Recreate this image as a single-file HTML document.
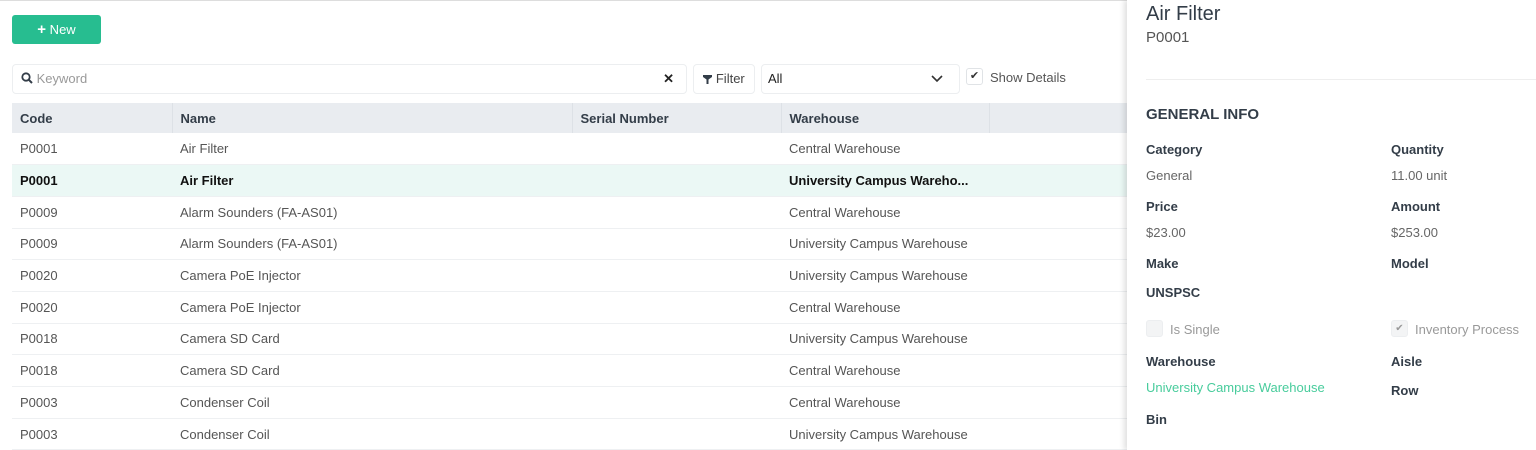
<!DOCTYPE html>
<html><head><style>
*{box-sizing:border-box;margin:0;padding:0}
body{width:1536px;height:450px;overflow:hidden;background:#fff;font-family:"Liberation Sans",sans-serif;position:relative}
.topline{position:absolute;left:0;top:0;width:1536px;height:1px;background:#ddd}
.btn{position:absolute;left:12px;top:15px;width:89px;height:29px;background:#27bd90;border-radius:3px;color:#fff;font-size:13px;line-height:29px;text-align:center}
.box{position:absolute;top:64px;height:30px;border:1px solid #eceef0;border-radius:4px;background:#fff;font-size:13px;line-height:28px;color:#444}
table{position:absolute;left:12px;top:103px;border-collapse:collapse;width:1115px;font-size:13px;table-layout:fixed}
th{background:#e9ecf0;color:#333d48;text-align:left;font-weight:bold;height:30px;padding-left:8px;border-right:1px solid #dde1e6}
td{height:31.7px;padding-left:8px;color:#555;border-bottom:1px solid #eef0f2;white-space:nowrap;overflow:hidden}
tr.sel td{background:#ebf8f5;color:#111;font-weight:bold}
.panel{position:absolute;left:1127px;top:0;width:409px;height:450px;background:#fff;box-shadow:-3px 0 5px rgba(0,0,0,.12)}
.p{position:absolute;font-size:13px}
.l{color:#333d48;font-weight:bold}
.v{color:#666}
</style></head><body>
<div class="topline"></div>
<div class="btn"><b style="font-size:15px">+</b> New</div>
<div class="box" style="left:12px;width:675px;padding-left:8px;color:#999">
<svg width="12" height="12" viewBox="0 0 12 12" style="vertical-align:-1px"><circle cx="5" cy="5" r="3.7" fill="none" stroke="#333d48" stroke-width="1.8"/><path d="M7.7 7.7L11 11" stroke="#333d48" stroke-width="2"/></svg> Keyword
<span style="position:absolute;right:12px;color:#222;font-weight:bold">✕</span></div>
<div class="box" style="left:693px;width:62px;text-align:center"><svg width="9" height="9" viewBox="0 0 9 9" style="vertical-align:-1px"><path d="M0 0h9v2L5.5 4.5V9h-2V4.5L0 2z" fill="#333d48"/></svg> Filter</div>
<div class="box" style="left:761px;width:199px;padding-left:6px;color:#222">All
<svg width="12" height="8" viewBox="0 0 12 8" style="position:absolute;right:16px;top:10px"><path d="M1 1l5 5 5-5" fill="none" stroke="#333" stroke-width="1.6"/></svg></div>
<div style="position:absolute;left:966px;top:68px;width:17px;height:17px;border:1px solid #e0e3e6;border-radius:3px;font-size:11px;text-align:center;line-height:15px;color:#333">✔</div>
<div class="p" style="left:990px;top:70px;color:#555">Show Details</div>
<table>
<colgroup><col style="width:160px"><col style="width:400px"><col style="width:209px"><col style="width:208px"><col></colgroup>
<tr><th>Code</th><th>Name</th><th>Serial Number</th><th>Warehouse</th><th style="border:none"></th></tr>
<tr><td>P0001</td><td>Air Filter</td><td></td><td>Central Warehouse</td><td></td></tr>
<tr class="sel"><td>P0001</td><td>Air Filter</td><td></td><td>University Campus Wareho...</td><td></td></tr>
<tr><td>P0009</td><td>Alarm Sounders (FA-AS01)</td><td></td><td>Central Warehouse</td><td></td></tr>
<tr><td>P0009</td><td>Alarm Sounders (FA-AS01)</td><td></td><td>University Campus Warehouse</td><td></td></tr>
<tr><td>P0020</td><td>Camera PoE Injector</td><td></td><td>University Campus Warehouse</td><td></td></tr>
<tr><td>P0020</td><td>Camera PoE Injector</td><td></td><td>Central Warehouse</td><td></td></tr>
<tr><td>P0018</td><td>Camera SD Card</td><td></td><td>University Campus Warehouse</td><td></td></tr>
<tr><td>P0018</td><td>Camera SD Card</td><td></td><td>Central Warehouse</td><td></td></tr>
<tr><td>P0003</td><td>Condenser Coil</td><td></td><td>Central Warehouse</td><td></td></tr>
<tr><td>P0003</td><td>Condenser Coil</td><td></td><td>University Campus Warehouse</td><td></td></tr>
</table>
<div class="panel">
<div class="p" style="left:19px;top:3px;font-size:20px;color:#333d48">Air Filter</div>
<div class="p" style="left:19px;top:29px;font-size:15px;color:#555">P0001</div>
<div style="position:absolute;left:19px;top:79px;width:390px;height:1px;background:#eee"></div>
<div class="p l" style="left:19px;top:106px;font-size:15px">GENERAL INFO</div>
<div class="p l" style="left:19px;top:142px">Category</div><div class="p l" style="left:264px;top:142px">Quantity</div>
<div class="p v" style="left:19px;top:168px">General</div><div class="p v" style="left:264px;top:168px">11.00 unit</div>
<div class="p l" style="left:19px;top:199px">Price</div><div class="p l" style="left:264px;top:199px">Amount</div>
<div class="p v" style="left:19px;top:225px">$23.00</div><div class="p v" style="left:264px;top:225px">$253.00</div>
<div class="p l" style="left:19px;top:256px">Make</div><div class="p l" style="left:264px;top:256px">Model</div>
<div class="p l" style="left:19px;top:285px">UNSPSC</div>
<div style="position:absolute;left:19px;top:320px;width:17px;height:17px;background:#f3f4f5;border:1px solid #eceef0;border-radius:3px"></div>
<div class="p" style="left:43px;top:322px;color:#999">Is Single</div>
<div style="position:absolute;left:264px;top:320px;width:17px;height:17px;background:#f3f4f5;border:1px solid #eceef0;border-radius:3px;font-size:10px;color:#999;text-align:center;line-height:15px">✔</div>
<div class="p" style="left:288px;top:322px;color:#999">Inventory Process</div>
<div class="p l" style="left:19px;top:354px">Warehouse</div><div class="p l" style="left:264px;top:354px">Aisle</div>
<div class="p" style="left:19px;top:380px;color:#48cc9c">University Campus Warehouse</div><div class="p l" style="left:264px;top:383px">Row</div>
<div class="p l" style="left:19px;top:412px">Bin</div>
</div>
</body></html>
